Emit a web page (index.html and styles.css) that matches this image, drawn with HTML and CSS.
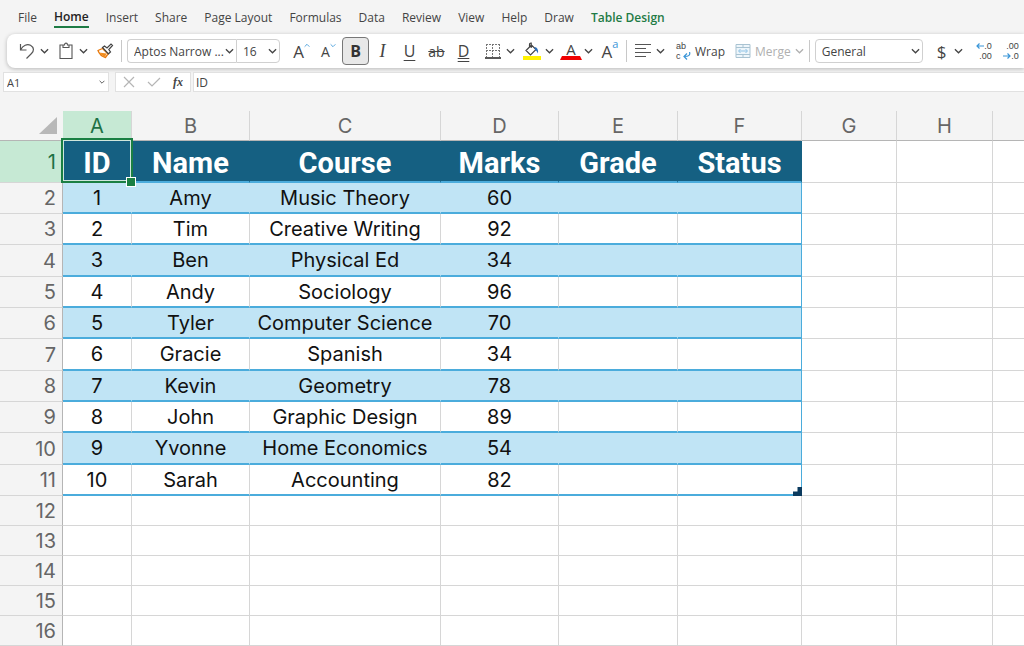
FILE: index.html
```html
<!DOCTYPE html>
<html lang="en">
<head>
  <meta charset="UTF-8">
  <title>Marks Sheet</title>
  <link rel="stylesheet" href="styles.css">
</head>
<body>
  <!-- shared icons -->
  <svg class="defs" aria-hidden="true">
    <symbol id="chevron" viewBox="0 0 10 6">
      <path d="M1 1l4 4 4-4" fill="none" stroke="currentColor" stroke-width="1.4"/>
    </symbol>
  </svg>

  <nav class="tabs">
    <button>File</button>
    <button class="active">Home</button>
    <button>Insert</button>
    <button>Share</button>
    <button>Page Layout</button>
    <button>Formulas</button>
    <button>Data</button>
    <button>Review</button>
    <button>View</button>
    <button>Help</button>
    <button>Draw</button>
    <button class="context">Table Design</button>
  </nav>

  <div class="toolbar">
    <div class="split">
      <button class="tool" aria-label="Undo">
        <svg width="16" height="18" viewBox="0 0 16 18"><path d="M1.500 2v6h6M1.800 7.500C4 3.500 8 1.500 11.500 3.200C15.500 5.500 15 9 12.500 11.500L7.500 16.500" fill="none" stroke="#555" stroke-width="1.200"/></svg>
      </button>
      <button class="drop" aria-label="Undo options"><svg><use href="#chevron"/></svg></button>
    </div>
    <div class="split">
      <button class="tool" aria-label="Paste">
        <svg width="14" height="18" viewBox="0 0 14 18"><path d="M4 3H1v13.500h12V3h-3M4 5.500V3h1.500C5.500 .5 8.500 .5 8.500 3H10v2.500z" fill="none" stroke="#555" stroke-width="1.100"/></svg>
      </button>
      <button class="drop" aria-label="Paste options"><svg><use href="#chevron"/></svg></button>
    </div>
    <button class="tool" aria-label="Format Painter">
      <svg width="18" height="16" viewBox="0 0 18 16">
        <path d="M2 7.500L6.500 5.500L12 11L9.500 14.500Q4 13 2 7.500z" fill="#fff" stroke="#e8790c" stroke-width="1.300"/>
        <path d="M3 9.500L10.500 10.500L9 14Q5 12.500 3 9.500z" fill="#f28c1c"/>
        <path d="M6.500 4.500L8.500 3L11 5L15 1L16.500 2.500L12.800 6.500L14.500 9L12.500 10.800z" fill="#fff" stroke="#444" stroke-width="1.200"/>
      </svg>
    </button>
    <span class="sep"></span>
    <div class="combos">
      <label class="combo font">
        <select aria-label="Font"><option>Aptos Narrow ...</option></select>
        <svg><use href="#chevron"/></svg>
      </label>
      <label class="combo size">
        <select aria-label="Font size"><option>16</option></select>
        <svg><use href="#chevron"/></svg>
      </label>
    </div>
    <div class="group">
      <button class="letter grow" aria-label="Increase font size">A<svg><use href="#chevron"/></svg></button>
      <button class="letter shrink" aria-label="Decrease font size">A<svg><use href="#chevron"/></svg></button>
      <button class="letter bold">B</button>
      <button class="letter italic">I</button>
      <button class="letter underline">U</button>
      <button class="letter strike">ab</button>
      <button class="letter double">D</button>
    </div>
    <div class="split">
      <button class="tool" aria-label="Borders">
        <svg width="16" height="16" viewBox="0 0 16 16"><path d="M1 1.500h14M1 7.500h14M1.500 1v13M7.500 1v13M14.500 1v13" fill="none" stroke="#777" stroke-dasharray="2 1"/><path d="M0 15h16" stroke="#222" stroke-width="1.500"/></svg>
      </button>
      <button class="drop" aria-label="Border options"><svg><use href="#chevron"/></svg></button>
    </div>
    <div class="split">
      <button class="tool" aria-label="Fill color">
        <svg width="18" height="18" viewBox="0 0 18 18">
          <path d="M8.500 3L3 8.500L7.500 13L13 7.500zM6.500 5V3Q6.500 .8 8.200 1V6" fill="none" stroke="#444" stroke-width="1.200"/>
          <path d="M11.500 5Q15.500 5 15 11.500Q13.500 8 12 8z" fill="#2b6cb8"/>
          <path d="M0 14h18v4H0z" fill="#fff200"/>
        </svg>
      </button>
      <button class="drop" aria-label="Fill options"><svg><use href="#chevron"/></svg></button>
    </div>
    <div class="split">
      <button class="tool font-color" aria-label="Font color">A</button>
      <button class="drop" aria-label="Font color options"><svg><use href="#chevron"/></svg></button>
    </div>
    <button class="tool phonetic">A<sup>a</sup></button>
    <span class="sep"></span>
    <div class="split">
      <button class="tool" aria-label="Align">
        <svg width="16" height="16" viewBox="0 0 16 16"><path d="M0 1.500h16M0 5.500h11M0 9.500h16M0 13.500h11" stroke="#555"/></svg>
      </button>
      <button class="drop" aria-label="Align options"><svg><use href="#chevron"/></svg></button>
    </div>
    <button class="labeled">
      <span class="stack wrap-icon">
        <span>ab</span>
        <span>c<svg width="8" height="8" viewBox="0 0 8 8"><path d="M6.500 0Q8 4.500 1.500 4.500M4 1.500l-3 3 3 3" fill="none" stroke="#3a96d8" stroke-width="1.200"/></svg></span>
      </span>
      Wrap
    </button>
    <button class="labeled" disabled>
      <svg width="16" height="16" viewBox="0 0 16 16">
        <path d="M1 1.500h14v13H1zM1 4.500h14M1 11.500h14M8 1.500v3M8 11.500v3" fill="#eef6fb" stroke="#a9c3d2"/>
        <path d="M4 8h8M5.500 6L3.500 8l2 2M10.500 6l2 2-2 2" fill="none" stroke="#8fc3e6"/>
      </svg>
      Merge
      <svg class="chev"><use href="#chevron"/></svg>
    </button>
    <span class="sep"></span>
    <label class="combo format">
      <select aria-label="Number format"><option>General</option></select>
      <svg><use href="#chevron"/></svg>
    </label>
    <div class="group">
      <div class="split">
        <button class="tool currency">$</button>
        <button class="drop" aria-label="Currency options"><svg><use href="#chevron"/></svg></button>
      </div>
    </div>
    <button class="tool stack" aria-label="Increase decimal">
      <span><svg width="8" height="8" viewBox="0 0 8 8"><path d="M8 4H1M3.500 1.500L1 4L3.500 6.500" fill="none" stroke="#3a96d8" stroke-width="1.200"/></svg>.0</span>
      <span>.00</span>
    </button>
    <button class="tool stack" aria-label="Decrease decimal">
      <span>.00</span>
      <span><svg width="8" height="8" viewBox="0 0 8 8"><path d="M0 4h7M4.500 1.500L7 4L4.500 6.500" fill="none" stroke="#3a96d8" stroke-width="1.200"/></svg>.0</span>
    </button>
  </div>

  <div class="formula-bar">
    <div class="name-box">
      <input type="text" value="A1" aria-label="Name box">
      <svg><use href="#chevron"/></svg>
    </div>
    <div class="entry">
      <button aria-label="Cancel"><svg width="12" height="12" viewBox="0 0 12 12"><path d="M1 1l10 10M11 1L1 11" stroke="#b5b5b5" stroke-width="1.200"/></svg></button>
      <button aria-label="Enter"><svg width="14" height="12" viewBox="0 0 14 12"><path d="M1 6l4 4 8-8" fill="none" stroke="#b5b5b5" stroke-width="1.200"/></svg></button>
      <button class="fx">fx</button>
    </div>
    <input class="formula" type="text" value="ID" aria-label="Formula">
  </div>

  <main class="sheet">
    <table>
      <colgroup>
        <col class="c-num"><col class="c-a"><col class="c-b"><col class="c-c"><col class="c-b"><col class="c-e"><col class="c-f"><col class="c-g"><col class="c-h"><col>
      </colgroup>
      <thead>
        <tr><th class="corner"><i></i></th><th class="picked">A</th><th>B</th><th>C</th><th>D</th><th>E</th><th>F</th><th>G</th><th>H</th><th></th></tr>
      </thead>
      <tbody class="head">
        <tr><th class="picked">1</th><td class="t selected">ID</td><td class="t">Name</td><td class="t">Course</td><td class="t">Marks</td><td class="t">Grade</td><td class="t last">Status</td><td></td><td></td><td></td></tr>
      </tbody>
      <tbody class="data">
        <tr><th>2</th><td class="t">1</td><td class="t">Amy</td><td class="t">Music Theory</td><td class="t">60</td><td class="t"></td><td class="t last"></td><td></td><td></td><td></td></tr>
        <tr><th>3</th><td class="t">2</td><td class="t">Tim</td><td class="t">Creative Writing</td><td class="t">92</td><td class="t"></td><td class="t last"></td><td></td><td></td><td></td></tr>
        <tr><th>4</th><td class="t">3</td><td class="t">Ben</td><td class="t">Physical Ed</td><td class="t">34</td><td class="t"></td><td class="t last"></td><td></td><td></td><td></td></tr>
        <tr><th>5</th><td class="t">4</td><td class="t">Andy</td><td class="t">Sociology</td><td class="t">96</td><td class="t"></td><td class="t last"></td><td></td><td></td><td></td></tr>
        <tr><th>6</th><td class="t">5</td><td class="t">Tyler</td><td class="t">Computer Science</td><td class="t">70</td><td class="t"></td><td class="t last"></td><td></td><td></td><td></td></tr>
        <tr><th>7</th><td class="t">6</td><td class="t">Gracie</td><td class="t">Spanish</td><td class="t">34</td><td class="t"></td><td class="t last"></td><td></td><td></td><td></td></tr>
        <tr><th>8</th><td class="t">7</td><td class="t">Kevin</td><td class="t">Geometry</td><td class="t">78</td><td class="t"></td><td class="t last"></td><td></td><td></td><td></td></tr>
        <tr><th>9</th><td class="t">8</td><td class="t">John</td><td class="t">Graphic Design</td><td class="t">89</td><td class="t"></td><td class="t last"></td><td></td><td></td><td></td></tr>
        <tr><th>10</th><td class="t">9</td><td class="t">Yvonne</td><td class="t">Home Economics</td><td class="t">54</td><td class="t"></td><td class="t last"></td><td></td><td></td><td></td></tr>
        <tr><th>11</th><td class="t">10</td><td class="t">Sarah</td><td class="t">Accounting</td><td class="t">82</td><td class="t"></td><td class="t last end"></td><td></td><td></td><td></td></tr>
      </tbody>
      <tbody class="blank">
        <tr><th>12</th><td></td><td></td><td></td><td></td><td></td><td></td><td></td><td></td><td></td></tr>
        <tr><th>13</th><td></td><td></td><td></td><td></td><td></td><td></td><td></td><td></td><td></td></tr>
        <tr><th>14</th><td></td><td></td><td></td><td></td><td></td><td></td><td></td><td></td><td></td></tr>
        <tr><th>15</th><td></td><td></td><td></td><td></td><td></td><td></td><td></td><td></td><td></td></tr>
        <tr><th>16</th><td></td><td></td><td></td><td></td><td></td><td></td><td></td><td></td><td></td></tr>
      </tbody>
    </table>
  </main>
</body>
</html>
```
FILE: styles.css
```css
* {
  box-sizing: border-box;
}

body {
  margin: 0;
  height: 100vh;
  display: flex;
  flex-direction: column;
  overflow: hidden;
  background: #f4f4f4;
  color: #444;
  font-family: "Open Sans", "Noto Sans", sans-serif;
  font-size: 12px;
}

button, input, select {
  margin: 0;
  padding: 0;
  border: none;
  background: none;
  color: inherit;
  font: inherit;
}

svg {
  display: block;
  flex: none;
}

.defs {
  position: absolute;
  width: 0;
  height: 0;
}

/* ribbon tabs */
.tabs {
  display: flex;
  gap: 17px;
  padding: 8px 18px 0;
  height: 34px;
  white-space: nowrap;
}

.tabs button {
  height: 20px;
  line-height: 18px;
}

.tabs .active {
  font-weight: 600;
  color: #222;
  border-bottom: 2px solid #1e7b45;
}

.tabs .context {
  font-weight: 600;
  color: #1e7b45;
}

/* toolbar */
.toolbar {
  display: flex;
  align-items: center;
  gap: 5px;
  height: 34px;
  flex: none;
  margin-left: 7px;
  padding-left: 9px;
  background: #fff;
  border-radius: 8px 0 0 8px;
  box-shadow: 0 1px 4px rgba(0, 0, 0, 0.25);
  white-space: nowrap;
}

.toolbar > * {
  flex: none;
}

.split, .group, .combos {
  display: flex;
  align-items: center;
}

.group {
  margin-left: 3px;
}

.tool, .drop, .letter {
  display: flex;
  align-items: center;
  justify-content: center;
  height: 28px;
}

.tool {
  width: 22px;
}

.drop {
  width: 12px;
}

.drop svg, .combo svg, .chev {
  width: 9px;
  height: 6px;
}

.sep {
  width: 1px;
  height: 22px;
  background: #c8c8c8;
}

.combo {
  position: relative;
  height: 24px;
  border: 1px solid #d0d0d0;
  border-radius: 4px;
}

.combo select {
  appearance: none;
  width: 100%;
  height: 100%;
  padding-left: 6px;
}

.combo svg {
  position: absolute;
  right: 2px;
  top: 8px;
  pointer-events: none;
}

.combo.font {
  width: 109px;
  border-radius: 4px 0 0 4px;
  border-right: none;
}

.combo.size {
  width: 44px;
  border-radius: 0 4px 4px 0;
}

.combo.format {
  width: 108px;
}

.letter {
  width: 27px;
  font-size: 16px;
}

.grow svg, .shrink svg {
  width: 6px;
  height: 5px;
  align-self: flex-start;
  margin-top: 6px;
  color: #3a96d8;
  stroke-width: 2px;
}

.grow {
  font-size: 17px;
}

.grow svg {
  transform: rotate(180deg);
}

.shrink {
  font-size: 14px;
}

.bold {
  font-weight: 700;
  color: #333;
  background: #e8e8e8;
  border: 1px solid #777;
  border-radius: 4px;
}

.italic {
  font-family: "Liberation Serif", serif;
  font-style: italic;
  font-size: 18px;
}

.underline {
  text-decoration: underline;
  text-underline-offset: 3px;
}

.strike {
  font-size: 14px;
  text-decoration: line-through;
}

.double {
  text-decoration: underline double;
}

.font-color {
  height: 18px;
  border: solid #f00000;
  border-width: 0 2px 4px;
  border-left-color: transparent;
  border-right-color: transparent;
  font-size: 15px;
  line-height: 14px;
}

.phonetic {
  font-size: 17px;
}

.phonetic sup {
  align-self: flex-start;
  font-size: 11px;
  line-height: 14px;
  color: #3a96d8;
}

/* two small lines used as an icon */
.stack {
  display: flex;
  flex-direction: column;
  justify-content: center;
  align-items: flex-end;
  font-family: "Liberation Sans", sans-serif;
  font-size: 9px;
  line-height: 10px;
}

.stack span {
  display: flex;
  align-items: center;
}

.wrap-icon {
  align-items: flex-start;
  width: 15px;
}

.wrap-icon svg {
  margin-left: 2px;
}

.labeled {
  display: flex;
  align-items: center;
  gap: 4px;
  padding-left: 5px;
}

.labeled:disabled {
  color: #b0b0b0;
}

.currency {
  font-size: 17px;
}

/* formula bar */
.formula-bar {
  display: flex;
  flex: none;
  height: 20px;
  margin: 4px 0 19px 3px;
}

.name-box, .entry, .formula {
  background: #fff;
  border: 1px solid #e1e1e1;
}

.name-box {
  display: flex;
  align-items: center;
  width: 106px;
  padding: 0 3px;
  margin-right: 6px;
}

.name-box input {
  flex: 1;
  min-width: 0;
  font-size: 11px;
}

.name-box svg {
  width: 6px;
  height: 4px;
}

.entry {
  display: flex;
  align-items: center;
  justify-content: space-between;
  width: 76px;
  padding: 0 7px;
  margin-right: 2px;
}

.fx {
  font-family: "Liberation Serif", serif;
  font-style: italic;
  font-weight: 700;
  font-size: 12px;
}

.formula {
  flex: 1;
  min-width: 0;
  padding-left: 2px;
  border-right: none;
  font-size: 12px;
}

/* sheet */
.sheet {
  flex: 1;
  min-height: 0;
  overflow: hidden;
}

table {
  width: 100%;
  table-layout: fixed;
  border-collapse: separate;
  border-spacing: 0;
  font-family: Inter, Roboto, sans-serif;
  font-size: 20px;
  line-height: 24px;
}

.c-num { width: 63px; }
.c-a { width: 69px; }
.c-b { width: 118px; }
.c-c { width: 191px; }
.c-e { width: 119px; }
.c-f { width: 124px; }
.c-g { width: 95px; }
.c-h { width: 96px; }

th, td {
  padding: 0;
  text-align: center;
  white-space: nowrap;
  border-right: 1px solid #d6d6d6;
  border-bottom: 1px solid #d6d6d6;
}

th:last-child, td:last-child {
  border-right: none;
}

th {
  font-weight: 400;
  color: #666;
}

td {
  background: #fff;
  color: #111;
}

thead th {
  height: 30px;
  border-bottom-color: #b5b5b5;
}

tbody th {
  text-align: right;
  padding-right: 6px;
  border-right-color: #b5b5b5;
}

.picked {
  background: #c6e9d4;
  color: #1e7145;
}

.corner i {
  display: block;
  width: 18px;
  height: 17px;
  margin-left: auto;
  margin-right: 5px;
  background: #b8b8b8;
  clip-path: polygon(100% 0, 100% 100%, 0 100%);
}

thead .corner {
  border-right-color: transparent;
}

.head tr {
  height: 42px;
}

.data tr {
  height: 31px;
}

.data tr:nth-child(3n) {
  height: 32px;
}

.blank tr {
  height: 30px;
}

.t {
  border-bottom: 2px solid #4bacdc;
}

.head .t {
  padding-top: 3px;
  background: #156082;
  border-right-color: #156082;
  color: #fff;
  font-family: Roboto, sans-serif;
  font-size: 29px;
  font-weight: 700;
}

.data tr:nth-child(odd) .t {
  background: #c0e4f5;
  border-right-color: #c0e4f5;
}

.data .last, .data tr:nth-child(odd) .last {
  border-right-color: #4bacdc;
}

/* active cell */
.selected {
  position: relative;
}

.selected::before {
  content: "";
  position: absolute;
  inset: -3px -2px -2px -2px;
  border: 2px solid #1a7f43;
  box-shadow: inset 0 0 0 1px #cfe6dc;
}

.selected::after {
  content: "";
  position: absolute;
  right: -5px;
  bottom: -6px;
  z-index: 1;
  width: 8px;
  height: 8px;
  background: #1a7f43;
  border: 1px solid #fff;
}

/* table resize corner */
.end {
  position: relative;
}

.end::after {
  content: "";
  position: absolute;
  right: -1px;
  bottom: -2px;
  width: 9px;
  height: 9px;
  background: #0b3a5e;
  clip-path: polygon(50% 0, 100% 0, 100% 100%, 0 100%, 0 50%, 50% 50%);
}
```
